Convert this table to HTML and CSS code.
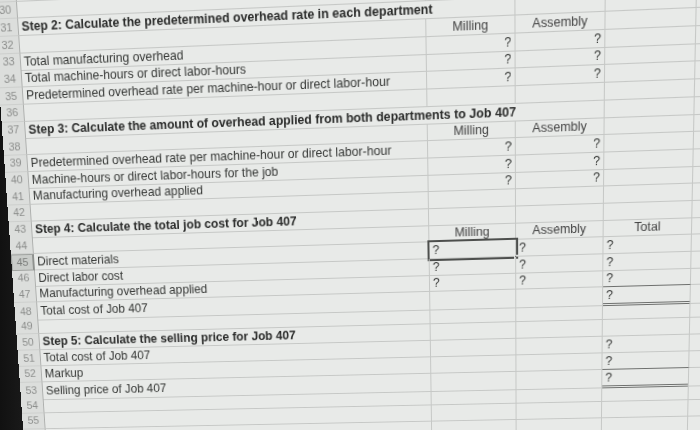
FILE: index.html
```html
<!DOCTYPE html>
<html>
<head>
<meta charset="utf-8">
<link rel="stylesheet" href="styles.css">
</head>
<body>
<div class="viewport">
  <div class="sheet">
    <div class="row"><div class="rn"></div><div class="c"></div><div class="c"></div><div class="c"></div><div class="c"></div><div class="c"></div></div>
    <div class="row"><div class="rn">30</div><div class="c"></div><div class="c"></div><div class="c"></div><div class="c"></div><div class="c"></div></div>
    <div class="row"><div class="rn">31</div><div class="c bold span2">Step 2: Calculate the predetermined overhead rate in each department</div><div class="c"></div><div class="c"></div><div class="c"></div></div>
    <div class="row"><div class="rn">32</div><div class="c"></div><div class="c ctr">Milling</div><div class="c ctr">Assembly</div><div class="c"></div><div class="c"></div></div>
    <div class="row"><div class="rn">33</div><div class="c">Total manufacturing overhead</div><div class="c rt">?</div><div class="c rt">?</div><div class="c"></div><div class="c"></div></div>
    <div class="row"><div class="rn">34</div><div class="c">Total machine-hours or direct labor-hours</div><div class="c rt">?</div><div class="c rt">?</div><div class="c"></div><div class="c"></div></div>
    <div class="row"><div class="rn">35</div><div class="c">Predetermined overhead rate per machine-hour or direct labor-hour</div><div class="c rt">?</div><div class="c rt">?</div><div class="c"></div><div class="c"></div></div>
    <div class="row"><div class="rn">36</div><div class="c"></div><div class="c"></div><div class="c"></div><div class="c"></div><div class="c"></div></div>
    <div class="row"><div class="rn">37</div><div class="c bold span3">Step 3: Calculate the amount of overhead applied from both departments to Job 407</div><div class="c"></div><div class="c"></div></div>
    <div class="row"><div class="rn">38</div><div class="c"></div><div class="c ctr">Milling</div><div class="c ctr">Assembly</div><div class="c"></div><div class="c"></div></div>
    <div class="row"><div class="rn">39</div><div class="c">Predetermined overhead rate per machine-hour or direct labor-hour</div><div class="c rt">?</div><div class="c rt">?</div><div class="c"></div><div class="c"></div></div>
    <div class="row"><div class="rn">40</div><div class="c">Machine-hours or direct labor-hours for the job</div><div class="c rt">?</div><div class="c rt">?</div><div class="c"></div><div class="c"></div></div>
    <div class="row"><div class="rn">41</div><div class="c">Manufacturing overhead applied</div><div class="c rt">?</div><div class="c rt">?</div><div class="c"></div><div class="c"></div></div>
    <div class="row"><div class="rn">42</div><div class="c"></div><div class="c"></div><div class="c"></div><div class="c"></div><div class="c"></div></div>
    <div class="row"><div class="rn">43</div><div class="c bold">Step 4: Calculate the total job cost for Job 407</div><div class="c"></div><div class="c"></div><div class="c"></div><div class="c"></div></div>
    <div class="row"><div class="rn">44</div><div class="c"></div><div class="c ctr">Milling</div><div class="c ctr">Assembly</div><div class="c ctr">Total</div><div class="c"></div></div>
    <div class="row"><div class="rn active">45</div><div class="c">Direct materials</div><div class="c selected">?</div><div class="c">?</div><div class="c">?</div><div class="c"></div></div>
    <div class="row"><div class="rn">46</div><div class="c">Direct labor cost</div><div class="c">?</div><div class="c">?</div><div class="c">?</div><div class="c"></div></div>
    <div class="row"><div class="rn">47</div><div class="c">Manufacturing overhead applied</div><div class="c">?</div><div class="c">?</div><div class="c under">?</div><div class="c"></div></div>
    <div class="row"><div class="rn">48</div><div class="c">Total cost of Job 407</div><div class="c"></div><div class="c"></div><div class="c dbl">?</div><div class="c"></div></div>
    <div class="row"><div class="rn">49</div><div class="c"></div><div class="c"></div><div class="c"></div><div class="c"></div><div class="c"></div></div>
    <div class="row"><div class="rn">50</div><div class="c bold">Step 5: Calculate the selling price for Job 407</div><div class="c"></div><div class="c"></div><div class="c"></div><div class="c"></div></div>
    <div class="row"><div class="rn">51</div><div class="c">Total cost of Job 407</div><div class="c"></div><div class="c"></div><div class="c">?</div><div class="c"></div></div>
    <div class="row"><div class="rn">52</div><div class="c">Markup</div><div class="c"></div><div class="c"></div><div class="c under">?</div><div class="c"></div></div>
    <div class="row"><div class="rn">53</div><div class="c">Selling price of Job 407</div><div class="c"></div><div class="c"></div><div class="c dbl">?</div><div class="c"></div></div>
    <div class="row"><div class="rn">54</div><div class="c"></div><div class="c"></div><div class="c"></div><div class="c"></div><div class="c"></div></div>
    <div class="row"><div class="rn">55</div><div class="c"></div><div class="c"></div><div class="c"></div><div class="c"></div><div class="c"></div></div>
    <div class="row"><div class="rn"></div><div class="c"></div><div class="c"></div><div class="c"></div><div class="c"></div><div class="c"></div></div>
    <div class="row"><div class="rn"></div><div class="c"></div><div class="c"></div><div class="c"></div><div class="c"></div><div class="c"></div></div>
    <div class="row"><div class="rn"></div><div class="c"></div><div class="c"></div><div class="c"></div><div class="c"></div><div class="c"></div></div>
  </div>
</div>
</body>
</html>
```

FILE: styles.css
```css
html, body {
  margin: 0;
  padding: 0;
  background: #151515;
  overflow: hidden;
}

.viewport {
  width: 700px;
  height: 430px;
  overflow: hidden;
  background: linear-gradient(90deg, #111 0px, #1c1c1c 30px, #2a2a2a 60px);
}

.sheet {
  width: 860px;
  background: #e8eae8;
  transform-origin: 24px 75.15px;
  transform: matrix3d(0.984314, -0.0387, 0, -0.000054991,
                      0.068403, 1.024047, 0, 0.000133434,
                      0, 0, 1, 0,
                      -3, -13.15, 0, 1);
  font-family: "Liberation Sans", Arial, sans-serif;
  font-size: 12.2px;
  color: #363836;
}

.row {
  display: grid;
  grid-template-columns: 24px 403px 86px 86px 86px 175px;
  height: 16.7px;
}

.rn {
  box-sizing: border-box;
  background: #dcdedc;
  border-right: 1px solid #aeb0ae;
  border-bottom: 1px solid #cdcfcd;
  color: #8c8e8c;
  font-size: 11px;
  display: flex;
  align-items: center;
  justify-content: center;
  line-height: 15px;
}

.rn.active {
  background: #c9ccc9;
  border: 1px solid #9fa29f;
  border-right: 2px solid #8e918e;
  color: #7b7d7b;
}

.c {
  box-sizing: border-box;
  border-right: 1px solid #c6c8c6;
  border-bottom: 1px solid #c6c8c6;
  padding: 1px 3px 0;
  white-space: nowrap;
  display: flex;
  align-items: center;
  line-height: 15px;
  min-width: 0;
  position: relative;
}

.bold {
  font-weight: bold;
  color: #2a2b2a;
}

.span2 { grid-column: span 2; }
.span3 { grid-column: span 3; }

.ctr { justify-content: center; color: #444; }
.rt { justify-content: flex-end; }

.under { border-bottom: 1px solid #6d6f6d; }
.dbl { border-bottom: 3px double #6d6f6d; }

.selected {
  outline: 2px solid #4d4f4d;
  outline-offset: 0;
}

.selected::after {
  content: "";
  position: absolute;
  right: -4px;
  bottom: -4px;
  width: 5px;
  height: 5px;
  background: #4d4f4d;
  border: 1px solid #e7e9e7;
  box-sizing: border-box;
}
```
